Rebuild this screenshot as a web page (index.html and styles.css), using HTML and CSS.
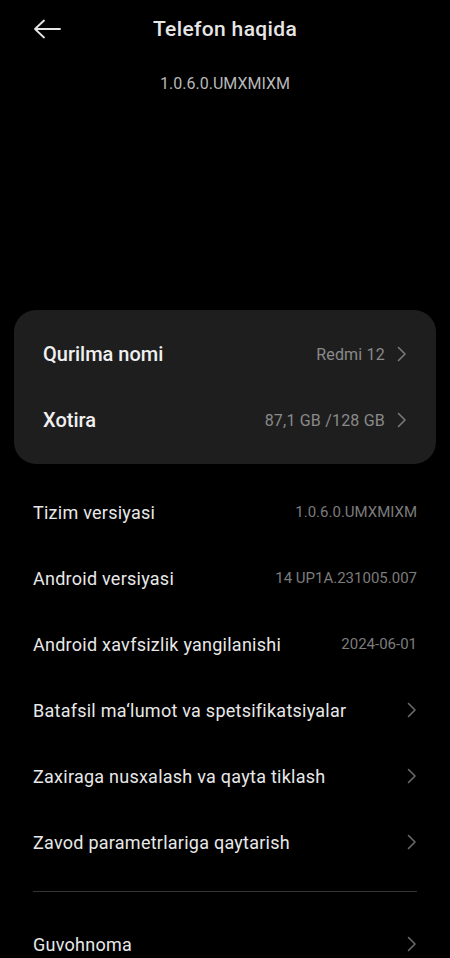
FILE: index.html
```html
<!DOCTYPE html>
<html>
<head>
<meta charset="utf-8">
<link rel="stylesheet" href="styles.css">
</head>
<body>
<div class="screen">
  <header class="header">
    <div class="back">
      <svg width="28" height="20" viewBox="0 0 28 20"><path d="M27 10H2M11 1.5L2 10l9 8.5" fill="none" stroke="#e6e6e6" stroke-width="1.8" stroke-linecap="round" stroke-linejoin="round"/></svg>
    </div>
    <div class="title">Telefon haqida</div>
    <div></div>
  </header>
  <div class="version">1.0.6.0.UMXMIXM</div>

  <section class="card">
    <div class="card-row">
      <span class="card-label">Qurilma nomi</span>
      <span class="card-right"><span class="card-value">Redmi 12</span><svg class="chev" width="10" height="16" viewBox="0 0 10 16"><path d="M1.5 1.5L8 8l-6.5 6.5" fill="none" stroke="#7a7a7a" stroke-width="1.6" stroke-linecap="round" stroke-linejoin="round"/></svg></span>
    </div>
    <div class="card-row">
      <span class="card-label">Xotira</span>
      <span class="card-right"><span class="card-value">87,1 GB /128 GB</span><svg class="chev" width="10" height="16" viewBox="0 0 10 16"><path d="M1.5 1.5L8 8l-6.5 6.5" fill="none" stroke="#7a7a7a" stroke-width="1.6" stroke-linecap="round" stroke-linejoin="round"/></svg></span>
    </div>
  </section>

  <section class="list">
    <div class="row"><span class="label">Tizim versiyasi</span><span class="value">1.0.6.0.UMXMIXM</span></div>
    <div class="row"><span class="label">Android versiyasi</span><span class="value">14 UP1A.231005.007</span></div>
    <div class="row"><span class="label">Android xavfsizlik yangilanishi</span><span class="value">2024-06-01</span></div>
    <div class="row"><span class="label">Batafsil ma‘lumot va spetsifikatsiyalar</span><svg class="chev" width="10" height="16" viewBox="0 0 10 16"><path d="M1.5 1.5L8 8l-6.5 6.5" fill="none" stroke="#6a6a6a" stroke-width="1.6" stroke-linecap="round" stroke-linejoin="round"/></svg></div>
    <div class="row"><span class="label">Zaxiraga nusxalash va qayta tiklash</span><svg class="chev" width="10" height="16" viewBox="0 0 10 16"><path d="M1.5 1.5L8 8l-6.5 6.5" fill="none" stroke="#6a6a6a" stroke-width="1.6" stroke-linecap="round" stroke-linejoin="round"/></svg></div>
    <div class="row"><span class="label">Zavod parametrlariga qaytarish</span><svg class="chev" width="10" height="16" viewBox="0 0 10 16"><path d="M1.5 1.5L8 8l-6.5 6.5" fill="none" stroke="#6a6a6a" stroke-width="1.6" stroke-linecap="round" stroke-linejoin="round"/></svg></div>
    <div class="divider"></div>
    <div class="row"><span class="label">Guvohnoma</span><svg class="chev" width="10" height="16" viewBox="0 0 10 16"><path d="M1.5 1.5L8 8l-6.5 6.5" fill="none" stroke="#6a6a6a" stroke-width="1.6" stroke-linecap="round" stroke-linejoin="round"/></svg></div>
  </section>
</div>
</body>
</html>
```

FILE: styles.css
```css
html, body {
  margin: 0;
  padding: 0;
  background: #000;
}
body {
  font-family: Roboto, "Noto Sans", "Liberation Sans", sans-serif;
  color: #e8e8e8;
  width: 450px;
  height: 958px;
  overflow: hidden;
}
.screen {
  display: flex;
  flex-direction: column;
}
.header {
  height: 58px;
  display: grid;
  grid-template-columns: 1fr auto 1fr;
  align-items: center;
}
.back {
  padding-left: 33px;
  display: flex;
  align-items: center;
}
.back svg {
  display: block;
}
.title {
  font-size: 21px;
  font-weight: 500;
  color: #e6e6e6;
  letter-spacing: 0.35px;
}
.version {
  margin-top: 16px;
  line-height: 20px;
  text-align: center;
  font-size: 16px;
  color: #b8b8b8;
}
.card {
  margin: 216px 14px 0;
  background: #1e1e1e;
  border-radius: 22px;
  padding: 11px 29px;
}
.card-row {
  height: 66px;
  display: flex;
  align-items: center;
  justify-content: space-between;
}
.card-label {
  font-size: 20px;
  font-weight: 500;
  color: #f0f0f0;
}
.card-right {
  display: flex;
  align-items: center;
  gap: 12px;
}
.card-value {
  font-size: 16px;
  letter-spacing: 0.2px;
  color: #8a8a8a;
}
.chev {
  display: block;
}
.list {
  margin-top: 15px;
  padding: 0 33px;
  display: flex;
  flex-direction: column;
}
.row {
  height: 66px;
  display: flex;
  align-items: center;
  justify-content: space-between;
}
.label {
  font-size: 18px;
  letter-spacing: 0.25px;
  color: #e8e8e8;
}
.value {
  font-size: 15px;
  color: #7c7c7c;
}
.divider {
  height: 1px;
  background: #333;
  margin: 16px 0 19px;
}
```
